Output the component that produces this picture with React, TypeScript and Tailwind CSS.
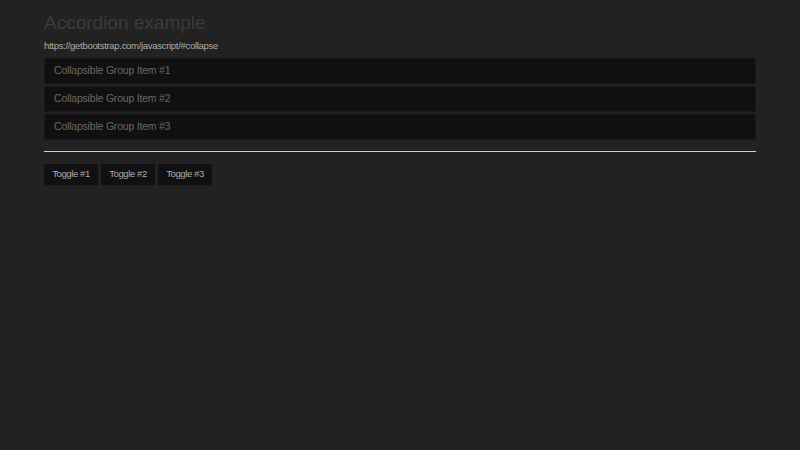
import React from "react";

export default function App() {
  const items = ["Collapsible Group Item #1", "Collapsible Group Item #2", "Collapsible Group Item #3"];
  return (
    <div className="min-h-[450px] w-full bg-[#222222] font-['Liberation_Sans',Arial,sans-serif]">
      <div className="mx-[44px] pt-[11px]">
        <h1 className="text-[19px] leading-[24px] text-[#3a3a3a]">Accordion example</h1>
        <p className="mt-[4px] text-[9.5px] leading-[13px] tracking-[-0.3px] text-[#aaaaaa]">https://getbootstrap.com/javascript/#collapse</p>
        <div className="mt-[6px] flex flex-col gap-[2px]">
          {items.map((t) => (
            <div key={t} className="h-[26px] rounded-[2px] border border-[#1a1a1a] bg-[#111111] pl-[9px] flex items-center text-[10.5px] tracking-[-0.2px] text-[#666666]">
              {t}
            </div>
          ))}
        </div>
        <hr className="mt-[11px] border-0 border-t border-[#cccccc]" />
        <div className="mt-[12px] flex gap-[3px]">
          {["Toggle #1", "Toggle #2", "Toggle #3"].map((t) => (
            <button key={t} className="h-[21px] w-[54px] rounded-[2px] bg-[#111111] text-[9.5px] tracking-[-0.4px] text-[#aaaaaa]">
              {t}
            </button>
          ))}
        </div>
      </div>
    </div>
  );
}
